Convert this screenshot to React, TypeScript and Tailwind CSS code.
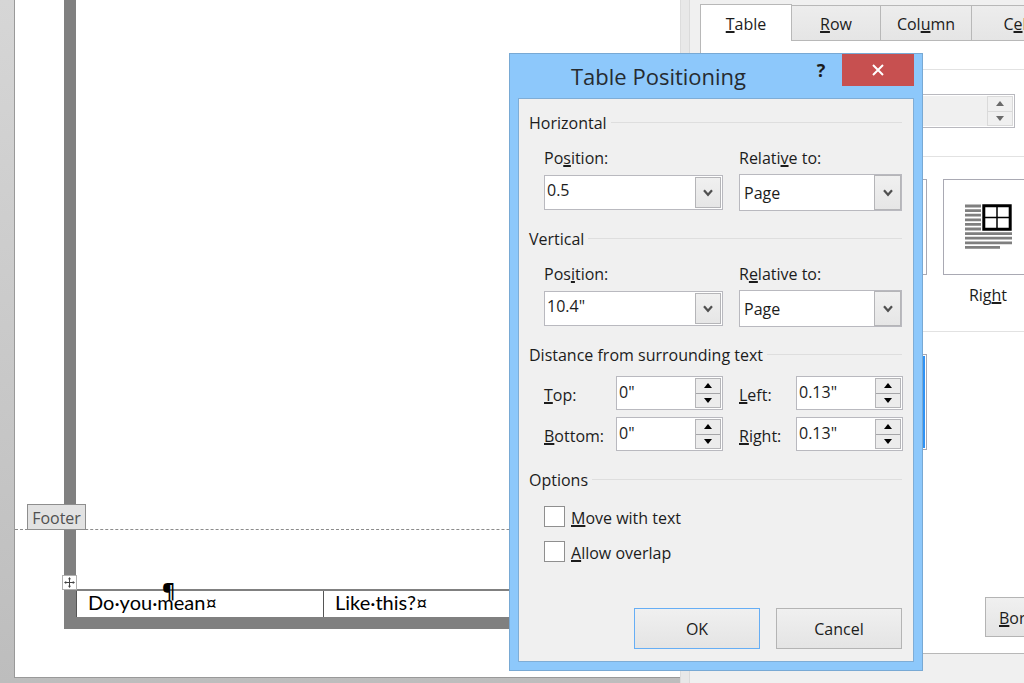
import { useState } from 'react'
import type { ReactNode } from 'react'

function Key({ children }: { children: ReactNode }) {
  return <u className="underline decoration-2 underline-offset-1">{children}</u>
}

function Chevron() {
  return (
    <svg viewBox="0 0 10 8" className="w-[10px] h-2" fill="none" stroke="#505050" strokeWidth="2.2">
      <path d="M1 1.2 5 5.8 9 1.2" />
    </svg>
  )
}

function Arrow({ down = false }: { down?: boolean }) {
  return (
    <svg viewBox="0 0 8 5" className="w-2 h-[5px]" fill="currentColor">
      {down ? <path d="M0 0h8L4 5z" /> : <path d="M0 5h8L4 0z" />}
    </svg>
  )
}

function SpinButtons({ name }: { name: string }) {
  return (
    <div className="flex flex-col w-[26px] shrink-0 border border-[#b5b5b8] divide-y divide-[#a5a5a8] bg-[#ececec] text-black">
      <button aria-label={`Increase ${name}`} className="flex flex-1 items-center justify-center">
        <Arrow />
      </button>
      <button aria-label={`Decrease ${name}`} className="flex flex-1 items-center justify-center">
        <Arrow down />
      </button>
    </div>
  )
}

function SectionTitle({ children }: { children: ReactNode }) {
  return (
    <div className="flex items-center gap-1 h-6">
      <h2 className="pt-px whitespace-nowrap">{children}</h2>
      <div className="flex-1 h-px bg-[#dedede]" />
    </div>
  )
}

type PlacementProps = {
  id: string
  value: string
  positionLabel: ReactNode
  relativeLabel: ReactNode
}

function Placement({ id, value, positionLabel, relativeLabel }: PlacementProps) {
  const [position, setPosition] = useState(value)

  return (
    <div className="flex gap-4 pl-[15px] mt-3 mb-[15px]">
      <div className="w-[179px]">
        <label htmlFor={`${id}-position`} className="block h-[22px] leading-6">
          {positionLabel}
        </label>
        <div className="flex h-[35px] mt-[7px] p-px bg-white border border-[#b9b9bf]">
          <input
            id={`${id}-position`}
            type="text"
            value={position}
            onChange={(e) => setPosition(e.target.value)}
            className="flex-1 min-w-0 pl-px pb-[5px] focus:outline-none"
          />
          <button
            aria-label="Show positions"
            className="flex items-center justify-center w-[26px] bg-linear-to-b from-[#f0f0f0] to-[#e6e6e6] border border-[#b5b5b8]"
          >
            <Chevron />
          </button>
        </div>
      </div>
      <div className="w-[164px]">
        <label htmlFor={`${id}-relative`} className="block h-[22px] leading-6">
          {relativeLabel}
        </label>
        <div className="grid h-[37px] mt-[6px] bg-white border border-[#b9b9bf]">
          <select
            id={`${id}-relative`}
            defaultValue="Page"
            className="col-start-1 row-start-1 appearance-none pl-1 pt-px focus:outline-none"
          >
            <option>Margin</option>
            <option>Page</option>
            <option>Column</option>
          </select>
          <span className="col-start-1 row-start-1 justify-self-end flex items-center justify-center w-[27px] bg-linear-to-b from-[#f0f0f0] to-[#e6e6e6] border border-[#b5b5b8] pointer-events-none">
            <Chevron />
          </span>
        </div>
      </div>
    </div>
  )
}

function Distance({ id, value, label }: { id: string; value: string; label: ReactNode }) {
  const [distance, setDistance] = useState(value)

  return (
    <div className="flex justify-between items-center">
      <label htmlFor={id} className="pt-[3px]">{label}</label>
      <div className="flex w-[107px] h-[34px] p-px bg-white border border-[#b9b9bf]">
        <input
          id={id}
          type="text"
          value={distance}
          onChange={(e) => setDistance(e.target.value)}
          className="flex-1 min-w-0 pl-px pb-[3px] focus:outline-none"
        />
        <SpinButtons name={id} />
      </div>
    </div>
  )
}

function PositioningDialog() {
  return (
    <div
      role="dialog"
      aria-label="Table Positioning"
      className="absolute top-[53px] right-[101px] w-[414px] px-2 pb-2 bg-[#8dc8fb] border border-[#78a9d4]"
    >
      <header className="flex items-start h-11">
        <h1 className="flex-1 pl-[53px] leading-11 text-[22px] text-[#262b30] whitespace-nowrap">
          Table Positioning
        </h1>
        <button aria-label="Help" className="w-[42px] h-8 text-lg leading-8 font-bold text-[#1c1c1c]">
          ?
        </button>
        <button aria-label="Close" className="flex items-center justify-center w-[72px] h-8 bg-[#c75050] text-white">
          <svg viewBox="0 0 12 12" className="w-3 h-3" stroke="currentColor" strokeWidth="2">
            <path d="M1 1 11 11M11 1 1 11" />
          </svg>
        </button>
      </header>

      <div className="pl-[10px] pr-[11px] pt-[11px] pb-3 bg-[#f0f0f0] border border-[#7fadd6]">
        <SectionTitle>Horizontal</SectionTitle>
        <Placement
          id="horizontal"
          value="0.5"
          positionLabel={<>Po<Key>s</Key>ition:</>}
          relativeLabel={<>Relati<Key>v</Key>e to:</>}
        />
        <SectionTitle>Vertical</SectionTitle>
        <Placement
          id="vertical"
          value={'10.4"'}
          positionLabel={<>Pos<Key>i</Key>tion:</>}
          relativeLabel={<>R<Key>e</Key>lative to:</>}
        />
        <SectionTitle>Distance from surrounding text</SectionTitle>
        <div className="grid grid-cols-[179px_164px] gap-x-4 gap-y-[7px] pl-[15px] mt-[10px] mb-4">
          <Distance id="top" value={'0"'} label={<><Key>T</Key>op:</>} />
          <Distance id="left" value={'0.13"'} label={<><Key>L</Key>eft:</>} />
          <Distance id="bottom" value={'0"'} label={<><Key>B</Key>ottom:</>} />
          <Distance id="right" value={'0.13"'} label={<><Key>R</Key>ight:</>} />
        </div>
        <SectionTitle>Options</SectionTitle>
        <div className="flex flex-col gap-[14px] pl-[15px] mt-[15px]">
          <label className="flex items-center gap-[6px] h-[21px]">
            <input type="checkbox" className="appearance-none w-[21px] h-[21px] bg-white border border-[#8f8f8f]" />
            <span className="pt-[2px]"><Key>M</Key>ove with text</span>
          </label>
          <label className="flex items-center gap-[6px] h-[21px]">
            <input type="checkbox" className="appearance-none w-[21px] h-[21px] bg-white border border-[#8f8f8f]" />
            <span className="pt-[2px]"><Key>A</Key>llow overlap</span>
          </label>
        </div>
        <div className="flex justify-end gap-4 mt-[46px]">
          <button className="w-[126px] h-[41px] pt-px bg-linear-to-b from-[#f0f0f0] to-[#e4e4e4] border border-[#66aef5]">
            OK
          </button>
          <button className="w-[126px] h-[41px] pt-px bg-linear-to-b from-[#f0f0f0] to-[#e4e4e4] border border-[#b4b4b4]">
            Cancel
          </button>
        </div>
      </div>
    </div>
  )
}

function DocumentPage() {
  return (
    <main className="flex-1 flex min-w-0 pl-[14px] pb-[5px] bg-linear-to-b from-[#d6d6d6] to-[#bdbdbd]">
      <div className="relative flex-1 flex flex-col min-w-0 pl-[49px] pb-12 bg-white border-l border-b border-[#999999]">
        <div className="flex-1 flex flex-col justify-end border-l-12 border-b-12 border-[#808080]">
          <div className="relative">
            <table className="w-full table-fixed border-t-2 border-[#808080] text-xl leading-5 text-black font-[Lato,'Noto_Sans',sans-serif]">
              <tbody>
                <tr className="h-[27px]">
                  <td className="w-[247px] p-0 pb-1 pl-[11px] border-x border-[#555555]">Do·you·mean¤</td>
                  <td className="p-0 pb-1 pl-[11px]">Like·this?¤</td>
                </tr>
              </tbody>
            </table>
            <span className="absolute left-[86px] -top-2 text-xl leading-5 font-bold text-black">¶</span>
            <button
              aria-label="Move table"
              className="absolute -left-[14px] -top-[14px] flex items-center justify-center w-[15px] h-[15px] bg-white border border-[#b0b0b0]"
            >
              <svg viewBox="0 0 11 11" className="w-[11px] h-[11px] shrink-0" fill="#444">
                <path d="M5 1.5h1V5h3.500v1H6v3.500H5V6H1.500V5H5zM5.500 0 7 2.200H4zM5.500 11 4 8.800h3zM0 5.500 2.200 4v3zM11 5.500 8.800 7V4z" />
              </svg>
            </button>
          </div>
        </div>
        <div className="absolute inset-x-0 bottom-[147px] border-b border-dashed border-[#8c8c8c] pl-3">
          <div className="absolute bottom-[-1px] w-[59px] h-[26px] pt-px leading-6 text-center text-[#505050] bg-[#e2e2e2] border border-[#8e8e8e]">
            Footer
          </div>
        </div>
      </div>
    </main>
  )
}

function WrapIcon() {
  return (
    <svg viewBox="0 0 47 46" className="w-[47px] h-[46px]">
      <path
        d="M0 2h16M0 6.600h16M0 11.200h16M0 15.800h16M0 20.400h16M0 25h16M0 29.600h47M0 34.200h47M0 38.800h47M0 43.400h35"
        stroke="#7f7f7f"
        strokeWidth="2.8"
      />
      <path d="M18.800 1.800h26.400v23.400H18.800z" fill="#fff" stroke="#000" strokeWidth="3" />
      <path d="M32 2v23M19 13.500h26" stroke="#000" strokeWidth="1.500" />
    </svg>
  )
}

function PropertiesPane() {
  return (
    <aside className="flex flex-col w-[335px] shrink-0 overflow-hidden pl-[10px] bg-[#f0f0f0] border-l border-[#dadada] text-[#1c1c1c]">
      <nav className="flex items-end shrink-0 h-[41px] pt-1 whitespace-nowrap">
        <button className="shrink-0 w-[92px] h-full pt-px bg-white border border-b-0 border-[#b8b8b8]">
          <Key>T</Key>able
        </button>
        <button className="shrink-0 w-[89px] h-9 pt-[2px] bg-linear-to-b from-[#ededed] to-[#e5e5e5] border-y border-r border-[#b8b8b8]">
          <Key>R</Key>ow
        </button>
        <button className="shrink-0 w-[91px] h-9 pt-[2px] bg-linear-to-b from-[#ededed] to-[#e5e5e5] border-y border-r border-[#b8b8b8]">
          Col<Key>u</Key>mn
        </button>
        <button className="shrink-0 w-[91px] h-9 pt-[2px] bg-linear-to-b from-[#ededed] to-[#e5e5e5] border-y border-r border-[#b8b8b8]">
          C<Key>e</Key>ll
        </button>
      </nav>
      <div className="flex-1 flex flex-col mb-[29px] bg-white border-l border-b border-[#b8b8b8]">
        <div className="mt-7 h-px shrink-0 bg-[#e2e2e2]" />
        <div className="flex self-end w-[180px] h-[34px] mt-6 mr-[9px] p-px bg-white border border-[#b9b9bf]">
          <input aria-label="Preferred width" disabled className="flex-1 min-w-0 bg-[#f0f0f0]" />
          <div className="flex flex-col w-[26px] bg-[#f0f0f0] border border-[#dadada] divide-y divide-[#dadada] text-[#6a6a6a]">
            <button disabled aria-label="Increase width" className="flex flex-1 items-center justify-center">
              <Arrow />
            </button>
            <button disabled aria-label="Decrease width" className="flex flex-1 items-center justify-center">
              <Arrow down />
            </button>
          </div>
        </div>
        <div className="mt-7 h-px shrink-0 bg-[#e2e2e2]" />
        <div className="flex gap-4 pl-[136px] mt-[22px]">
          <button aria-label="Center" className="shrink-0 w-[90px] h-24 bg-white border border-[#a9a9b3]" />
          <div className="shrink-0 w-[90px] text-center">
            <button
              id="align-right"
              aria-label="Right"
              className="flex items-center justify-center w-full h-24 bg-white border border-[#a9a9b3]"
            >
              <WrapIcon />
            </button>
            <label htmlFor="align-right" className="block mt-2 leading-6">
              Rig<Key>h</Key>t
            </label>
          </div>
        </div>
        <div className="mt-6 h-px shrink-0 bg-[#e2e2e2]" />
        <button
          aria-label="Around"
          className="w-[90px] h-24 ml-[136px] mt-[22px] p-px bg-white border border-[#a9a9b3]"
        >
          <span className="block h-full border-2 border-[#2f92f5]" />
        </button>
        <button className="w-[124px] h-10 mt-auto mb-4 ml-[284px] pl-[13px] pt-px text-left bg-linear-to-b from-[#f0f0f0] to-[#e4e4e4] border border-[#b4b4b4]">
          <Key>B</Key>orders
        </button>
      </div>
    </aside>
  )
}

export default function App() {
  return (
    <div className="relative flex min-h-screen overflow-hidden text-base text-[#1c1c1c] font-['Open_Sans','Noto_Sans',sans-serif]">
      <DocumentPage />
      <div className="w-[9px] shrink-0 bg-[#e8e8e8] border-l border-[#dcdcdc]" />
      <PropertiesPane />
      <PositioningDialog />
    </div>
  )
}
